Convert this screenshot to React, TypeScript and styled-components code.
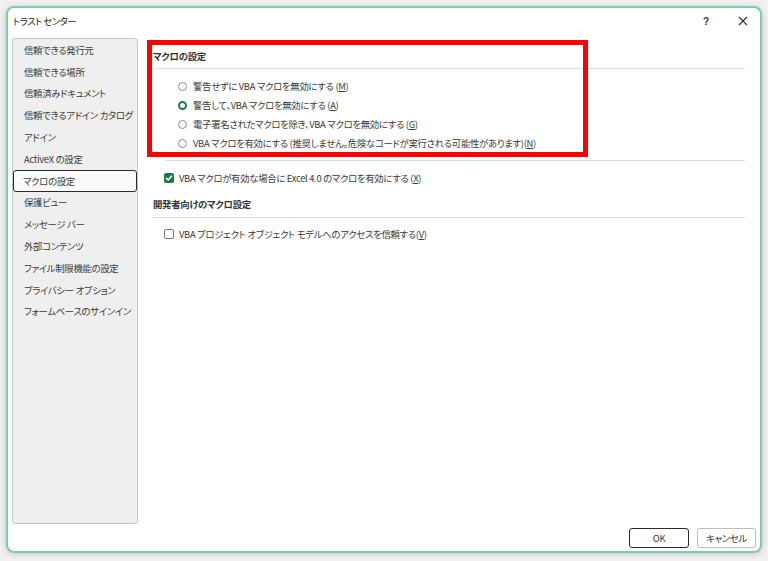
import React from "react";
import styled, { createGlobalStyle } from "styled-components";

const Global = createGlobalStyle`
  html, body { margin: 0; padding: 0; background: #f1f1f1; }
  body { font-family: "Noto Sans CJK JP", "Noto Sans", sans-serif; color: #333; }
  * { box-sizing: border-box; }
`;

const Page = styled.div`
  width: 768px;
  height: 561px;
  padding: 6px 6px 8px 6px;
  background: #f1f1f1;
`;

const Dialog = styled.div`
  width: 756px;
  height: 547px;
  background: #fff;
  border: 2px solid #86c9a2;
  border-radius: 8px;
  box-shadow: 0 1px 6px rgba(0, 0, 0, 0.18);
  display: flex;
  flex-direction: column;
  font-size: 9.4px;
  letter-spacing: -0.3px;
  font-feature-settings: "palt";
`;

const TitleBar = styled.div`
  height: 30px;
  display: flex;
  align-items: center;
  padding: 0 6px 0 5px;
  color: #222;
`;

const Title = styled.div`
  flex: 1;
  padding-bottom: 4px;
  letter-spacing: -0.5px;
`;

const TitleButton = styled.div`
  width: 22px;
  height: 22px;
  display: flex;
  align-items: center;
  justify-content: center;
  margin-bottom: 4px;
  color: #333;
  font-weight: 700;
  font-size: 10px;
  font-family: "Liberation Sans", sans-serif;
`;

const TitleGap = styled.div`
  width: 15px;
`;

const Body = styled.div`
  flex: 1;
  display: flex;
  padding-left: 4px;
`;

const Nav = styled.div`
  width: 126px;
  background: #efefef;
  border: 1px solid #c6c6c6;
  border-radius: 3px;
  display: flex;
  flex-direction: column;
`;

const NavItem = styled.div<{ $active?: boolean }>`
  height: 21.8px;
  display: flex;
  align-items: center;
  padding-left: ${(p) => (p.$active ? "9px" : "10px")};
  border: ${(p) => (p.$active ? "1.5px solid #2b2b2b" : "1.5px solid transparent")};
  border-radius: 3px;
  background: ${(p) => (p.$active ? "#fafafa" : "transparent")};
  color: #3a3a3a;
  white-space: nowrap;
`;

const Content = styled.div`
  position: relative;
  flex: 1;
  margin-left: 15px;
  margin-right: 15px;
  display: flex;
  flex-direction: column;
`;

const Heading = styled.div<{ $top: number }>`
  margin-top: ${(p) => p.$top}px;
  height: 16px;
  line-height: 16px;
  font-weight: 700;
  color: #333;
`;

const Rule = styled.div<{ $top: number; $indent?: number }>`
  margin-top: ${(p) => p.$top}px;
  margin-left: ${(p) => p.$indent ?? 0}px;
  height: 1px;
  background: #dcdcdc;
`;

const RadioGroup = styled.div`
  padding-top: 7.5px;
  display: flex;
  flex-direction: column;
`;

const OptionRow = styled.div<{ $top?: number; $indent: number }>`
  margin-top: ${(p) => p.$top ?? 0}px;
  height: 19px;
  display: flex;
  align-items: center;
  padding-left: ${(p) => p.$indent}px;
  white-space: nowrap;
  color: #3a3a3a;
`;

const Radio = styled.span<{ $checked?: boolean }>`
  width: 9px;
  height: 9px;
  border-radius: 50%;
  border: ${(p) => (p.$checked ? "2.5px solid #1f7a45" : "1px solid #8a8a8a")};
  background: #fff;
  margin-right: 6px;
  flex: none;
`;

const Check = styled.span<{ $checked?: boolean }>`
  width: 10px;
  height: 10px;
  border-radius: 2px;
  border: ${(p) => (p.$checked ? "none" : "1px solid #7a7a7a")};
  background: ${(p) => (p.$checked ? "#1f7a45" : "#fff")};
  margin-right: 5px;
  flex: none;
  display: flex;
  align-items: center;
  justify-content: center;
`;

const Key = styled.span`
  text-decoration: underline;
  text-underline-offset: 1px;
`;

const Highlight = styled.div`
  position: absolute;
  left: -6px;
  top: 2px;
  width: 441px;
  height: 117px;
  border: 5px solid #ff0000;
  pointer-events: none;
`;

const Footer = styled.div`
  height: 27px;
  display: flex;
  justify-content: flex-end;
  align-items: flex-start;
  padding: 4px 4px 0 0;
  gap: 8px;
`;

const Button = styled.div<{ $default?: boolean }>`
  width: ${(p) => (p.$default ? "60px" : "59px")};
  height: 20px;
  display: flex;
  align-items: center;
  justify-content: center;
  border: ${(p) => (p.$default ? "1.5px solid #2b2b2b" : "1px solid #bdbdbd")};
  border-radius: 3px;
  background: #fff;
  color: #333;
`;

const navItems = [
  "信頼できる発行元",
  "信頼できる場所",
  "信頼済みドキュメント",
  "信頼できるアドイン カタログ",
  "アドイン",
  "ActiveX の設定",
  "マクロの設定",
  "保護ビュー",
  "メッセージ バー",
  "外部コンテンツ",
  "ファイル制限機能の設定",
  "プライバシー オプション",
  "フォームベースのサインイン",
];

const radios: { label: string; key: string; checked?: boolean }[] = [
  { label: "警告せずに VBA マクロを無効にする ", key: "M" },
  { label: "警告して、VBA マクロを無効にする ", key: "A", checked: true },
  { label: "電子署名されたマクロを除き、VBA マクロを無効にする ", key: "G" },
  { label: "VBA マクロを有効にする (推奨しません。危険なコードが実行される可能性があります)", key: "N" },
];

const CheckMark = () => (
  <svg width="8" height="8" viewBox="0 0 8 8">
    <path d="M1.3 4.2 L3.2 6 L6.7 2" stroke="#fff" strokeWidth="1.4" fill="none" strokeLinecap="round" strokeLinejoin="round" />
  </svg>
);

export default function App() {
  return (
    <Page>
      <Global />
      <Dialog>
        <TitleBar>
          <Title>トラスト センター</Title>
          <TitleButton>?</TitleButton>
          <TitleGap />
          <TitleButton>
            <svg width="10" height="10" viewBox="0 0 10 10">
              <path d="M1 1 L9 9 M9 1 L1 9" stroke="#333" strokeWidth="1.1" />
            </svg>
          </TitleButton>
        </TitleBar>
        <Body>
          <Nav>
            {navItems.map((n) => (
              <NavItem key={n} $active={n === "マクロの設定"}>
                {n}
              </NavItem>
            ))}
          </Nav>
          <Content>
            <Heading $top={10}>マクロの設定</Heading>
            <Rule $top={4} />
            <RadioGroup>
              {radios.map((r) => (
                <OptionRow key={r.key} $indent={25}>
                  <Radio $checked={r.checked} />
                  <span>
                    {r.label}(<Key>{r.key}</Key>)
                  </span>
                </OptionRow>
              ))}
            </RadioGroup>
            <Rule $top={7.5} $indent={12} />
            <OptionRow $top={7.5} $indent={11}>
              <Check $checked>
                <CheckMark />
              </Check>
              <span>
                VBA マクロが有効な場合に Excel 4.0 のマクロを有効にする (<Key>X</Key>)
              </span>
            </OptionRow>
            <Heading $top={8.5}>開発者向けのマクロ設定</Heading>
            <Rule $top={5} />
            <OptionRow $top={6} $indent={11}>
              <Check />
              <span>
                VBA プロジェクト オブジェクト モデルへのアクセスを信頼する(<Key>V</Key>)
              </span>
            </OptionRow>
            <Highlight />
          </Content>
        </Body>
        <Footer>
          <Button $default>OK</Button>
          <Button>キャンセル</Button>
        </Footer>
      </Dialog>
    </Page>
  );
}
